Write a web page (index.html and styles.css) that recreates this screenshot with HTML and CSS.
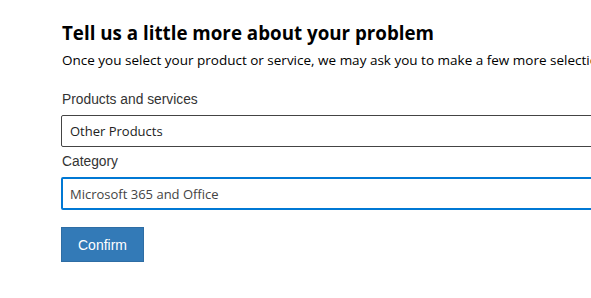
FILE: index.html
```html
<!DOCTYPE html>
<html>
<head>
<meta charset="utf-8">
<link rel="stylesheet" href="styles.css">
</head>
<body>
<main class="page">
  <h1 class="title">Tell us a little more about your problem</h1>
  <p class="intro">Once you select your product or service, we may ask you to make a few more selections to help us understand your problem.</p>
  <div class="field">
    <label class="label">Products and services</label>
    <div class="select">Other Products</div>
  </div>
  <div class="field">
    <label class="label">Category</label>
    <div class="select select--focus">Microsoft 365 and Office</div>
  </div>
  <button class="btn">Confirm</button>
</main>
</body>
</html>
```
FILE: styles.css
```css
html, body { margin: 0; padding: 0; background: #fff; overflow: hidden; }
.page {
  width: 700px;
  padding: 20px 0 0 61px;
  display: flex;
  flex-direction: column;
  align-items: flex-start;
}
.title {
  margin: 0;
  font-family: "Open Sans", sans-serif;
  font-weight: 700;
  font-size: 18.75px;
  line-height: 26px;
  color: #000;
  padding-left: 1px;
}
.intro {
  margin: 4px 0 0;
  font-family: "Open Sans", sans-serif;
  font-size: 13.5px;
  line-height: 20px;
  color: #000;
  white-space: nowrap;
  padding-left: 1px;
}
.field { display: flex; flex-direction: column; align-self: stretch; }
.label {
  font-family: "Liberation Sans", Arial, sans-serif;
  font-size: 13.8px;
  line-height: 20px;
  color: #333;
  margin-top: 20px;
  padding-left: 1px;
}
.field + .field .label { margin-top: 5px; }
.select {
  margin-top: 5px;
  box-sizing: border-box;
  height: 32px;
  border: 1px solid #444;
  border-radius: 2px;
  padding: 0 8px;
  display: flex;
  align-items: center;
  font-family: "Open Sans", sans-serif;
  font-size: 13px;
  color: #222;
}
.select--focus {
  margin-top: 5px;
  height: 33px;
  border: 2px solid #0078d4;
  color: #444;
  padding: 0 7px;
}
.btn {
  margin-top: 17px;
  width: 83px;
  height: 35px;
  background: #337ab7;
  border: 1px solid #2e6da4;
  color: #fff;
  font-family: "Liberation Sans", Arial, sans-serif;
  font-size: 14px;
  padding: 0;
  cursor: pointer;
}
```
